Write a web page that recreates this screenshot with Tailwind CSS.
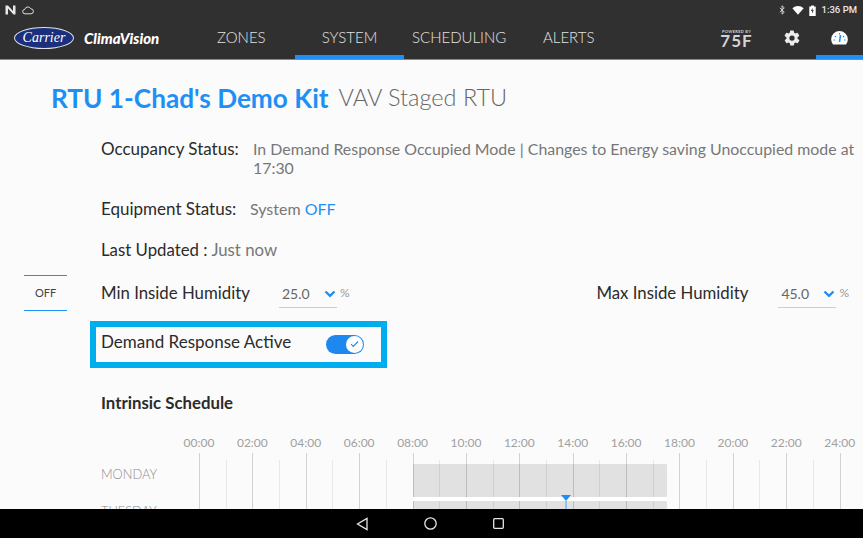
<!DOCTYPE html>
<html lang="en">
<head>
    <meta charset="UTF-8">
    <meta name="viewport" content="width=device-width, initial-scale=1.0">
    <title>ClimaVision - System</title>
    <script src="https://cdn.jsdelivr.net/npm/@tailwindcss/browser@4"></script>
</head>
<body class="bg-[#fbfbfb] font-['Lato',sans-serif] overflow-hidden">
<div class="w-[863px] h-[538px] flex flex-col overflow-hidden">

    <!-- status bar -->
    <div class="h-[20px] shrink-0 bg-[#303030] flex items-center pl-[5px] pr-[6px] text-white">
        <svg width="11" height="10" viewBox="0 0 11 10"><path d="M0.500 0.500h2.500l5 5.500v-5.500h2.500v9h-2l-5.500-6v6h-2.500z" fill="#e8e8e8"/></svg>
        <svg width="12" height="9" viewBox="0 0 12 9" class="ml-[6px]"><path d="M3 7.800a2.200 2.200 0 0 1-.2-4.400a3.200 3.200 0 0 1 6-.6a2.500 2.500 0 0 1 .2 5z" fill="none" stroke="#dddddd" stroke-width="1"/></svg>
        <div class="ml-auto flex items-center">
            <svg width="7" height="10" viewBox="0 0 8 11"><path d="M1 3l5 5l-2.500 2.300v-9.600l2.500 2.300l-5 5" fill="none" stroke="#e8e8e8" stroke-width="1"/></svg>
            <svg width="12" height="9" viewBox="0 0 16 11" class="ml-[6px]"><path d="M0.500 2.500a11 11 0 0 1 15 0l-7.500 8.500z" fill="#ffffff"/></svg>
            <svg width="7" height="11" viewBox="0 0 7 12" class="ml-[5px]"><path d="M2 0.500h3v1h2v10.500h-7v-10.500h2z" fill="#ffffff"/><path d="M3.800 3l-2 3.500h1.400l-.4 3l2.200-3.800h-1.400z" fill="#303030"/></svg>
            <span class="ml-[6px] text-[9.500px] font-['Roboto',sans-serif] font-medium text-[#e8e8e8] whitespace-nowrap leading-none">1:36 PM</span>
        </div>
    </div>

    <!-- top nav -->
    <div class="h-[40px] shrink-0 bg-[#303030] border-b border-[#8a8a8a] flex items-stretch">
        <div class="w-[217px] shrink-0 flex items-center pl-[14px] pb-[3px]">
            <div class="w-[60px] h-[22px] rounded-[50%] bg-[#1b2f7c] border border-[#dfe3ee] flex items-center justify-center">
                <span class="font-['Liberation_Serif',serif] italic text-[14px] text-white leading-none">Carrier</span>
            </div>
            <span class="ml-[10px] text-[15px] font-black italic text-white leading-none">ClimaVision</span>
        </div>
        <div class="flex items-stretch text-[15px] font-light text-[#e4e4e4]">
            <div class="w-[78px] flex items-center pb-[5px]">ZONES</div>
            <div class="w-[109px] flex items-center justify-center pb-[1px] border-b-[4px] border-[#1e90f5]">SYSTEM</div>
            <div class="w-[139px] flex items-center pl-[8px] pb-[5px]">SCHEDULING</div>
            <div class="flex items-center pb-[5px]">ALERTS</div>
        </div>
        <div class="ml-auto flex items-stretch">
            <div class="w-[71px] flex flex-col items-center pt-[9px] text-[#d4d4d4]">
                <span class="text-[4px] font-bold leading-[5px] tracking-[0.3px]">POWERED BY</span>
                <span class="text-[17px] font-bold leading-[13px] tracking-[1px]">75F</span>
            </div>
            <div class="w-[44px] flex items-center justify-center pb-[3px] pr-[4px]">
                <svg width="18" height="18" viewBox="0 0 24 24"><path fill="#ececec" d="M19.400 13a7.500 7.500 0 0 0 0-2l2.100-1.600a.5.500 0 0 0 .1-.6l-2-3.500a.5.500 0 0 0-.6-.2l-2.500 1a7.300 7.300 0 0 0-1.700-1l-.4-2.600a.5.500 0 0 0-.5-.4h-4a.5.500 0 0 0-.5.400l-.4 2.600a7.300 7.300 0 0 0-1.700 1l-2.500-1a.5.500 0 0 0-.6.2l-2 3.500a.5.500 0 0 0 .1.600L4.600 11a7.500 7.500 0 0 0 0 2l-2.100 1.600a.5.500 0 0 0-.1.600l2 3.500a.5.500 0 0 0 .6.2l2.500-1a7.300 7.300 0 0 0 1.700 1l.4 2.600a.5.500 0 0 0 .5.400h4a.5.500 0 0 0 .5-.4l.4-2.600a7.300 7.300 0 0 0 1.700-1l2.500 1a.5.500 0 0 0 .6-.2l2-3.500a.5.500 0 0 0-.1-.6zM12 15.500a3.500 3.500 0 1 1 0-7a3.500 3.500 0 0 1 0 7z"/></svg>
            </div>
            <div class="w-[47px] flex items-center justify-center border-b-[4px] border-[#1e90f5]">
                <svg width="17" height="14" viewBox="0 0 17 14"><path d="M2 13.500a8.300 8.300 0 1 1 13 0z" fill="#ffffff"/><path d="M8.500 11l1-7" stroke="#1e90f5" stroke-width="1.600"/><path d="M2.500 9h1.500M4 5l1 1M8.500 2v1.500M13 5l-1 1M14.500 9h-1.500" stroke="#1e90f5" stroke-width="1.200"/></svg>
            </div>
        </div>
    </div>

    <!-- page content, cut off by the android nav bar -->
    <div class="h-[449px] overflow-hidden bg-[#fbfbfb]">
        <div class="flex items-baseline pl-[51px] pt-[22px] leading-[32px]">
            <h1 class="text-[26.200px] font-bold text-[#1e90f5]">RTU 1-Chad's Demo Kit</h1>
            <span class="ml-[10px] text-[23.500px] font-light text-[#666666] -translate-y-[2px]">VAV Staged RTU</span>
        </div>

        <div class="flex pl-[101px] pt-[24px] pr-[4px] text-[17px] text-[#2b2b2b] leading-[19px]">
            <span class="w-[152px] shrink-0">Occupancy Status:</span>
            <span class="text-[15.900px] text-[#777777] leading-[19px]">In Demand Response Occupied Mode | Changes to Energy saving Unoccupied mode at 17:30</span>
        </div>

        <div class="flex items-baseline pl-[101px] pt-[22px] text-[17px] text-[#2b2b2b] leading-[20px]">
            <span class="w-[149px] shrink-0">Equipment Status:</span>
            <span class="text-[16px] text-[#777777]">System <span class="text-[#1e90f5]">OFF</span></span>
        </div>

        <div class="flex items-baseline pl-[101px] pt-[21px] text-[16.800px] text-[#2b2b2b] leading-[20px]">
            <span>Last Updated :</span>
            <span class="ml-[4px] text-[#777777]">Just now</span>
        </div>

        <div class="flex items-center pl-[24px] pr-[14px] pt-[15px]">
            <div class="w-[43px] h-[36px] shrink-0 border-y border-[#1e90f5] flex items-center justify-center text-[11px] text-[#444444]">OFF</div>
            <span class="ml-[34px] w-[178px] text-[16.800px] text-[#2b2b2b]">Min Inside Humidity</span>
            <div class="w-[58px] h-[27px] mt-[2px] border-b border-[#cfcfcf] flex items-center justify-between text-[14px] text-[#666666] pl-[3px] pr-[1px]">
                25.0
                <svg width="12" height="8" viewBox="0 0 12 8"><path d="M1.500 1.500l4.500 4.300l4.500-4.300" fill="none" stroke="#1e90f5" stroke-width="2.400"/></svg>
            </div>
            <span class="ml-[3px] text-[12px] text-[#999999]">%</span>

            <span class="ml-auto w-[182px] text-[16.800px] text-[#2b2b2b]">Max Inside Humidity</span>
            <div class="w-[58px] h-[27px] mt-[2px] border-b border-[#cfcfcf] flex items-center justify-between text-[14px] text-[#666666] pl-[3px] pr-[1px]">
                45.0
                <svg width="12" height="8" viewBox="0 0 12 8"><path d="M1.500 1.500l4.500 4.300l4.500-4.300" fill="none" stroke="#1e90f5" stroke-width="2.400"/></svg>
            </div>
            <span class="ml-[3px] text-[12px] text-[#999999]">%</span>
        </div>

        <div class="ml-[90px] mt-[10px] w-[297px] h-[47px] border-[6px] border-[#00aeef] flex items-center pl-[5px] pb-[6px]">
            <span class="text-[17px] text-[#2b2b2b]">Demand Response Active</span>
            <div class="ml-[35px] mt-[5px] w-[38px] h-[19px] rounded-full bg-[#1e88f0] flex items-center justify-end pr-[1px]">
                <div class="w-[17px] h-[17px] rounded-full bg-white flex items-center justify-center">
                    <svg width="9" height="8" viewBox="0 0 9 8"><path d="M1 4.200l2.300 2.300l4.700-5" fill="none" stroke="#1e88f0" stroke-width="1.100"/></svg>
                </div>
            </div>
        </div>

        <h2 class="pl-[101px] pt-[24px] text-[16.800px] font-bold text-[#2b2b2b] leading-[22px]">Intrinsic Schedule</h2>

        <!-- schedule chart -->
        <div class="pl-[101px] pt-[22px]">
            <div id="hours" class="ml-[71.300px] flex h-[14px] text-[12px] leading-[14px] text-[#a0a0a0]"></div>
            <div class="flex mt-[3px]">
                <div class="w-[98px] shrink-0 pt-[13px] text-[12.800px] font-light text-[#8c8c8c] leading-[16px]">
                    <div class="h-[37px]">MONDAY</div>
                    <div>TUESDAY</div>
                </div>
                <div class="relative flex-1 h-[56px]">
                    <div id="ticks" class="flex h-full"></div>
                    <div class="absolute left-[213.600px] top-[11px] w-[254.500px] h-[45px] flex flex-col">
                        <div class="h-[33px] bg-black/10 rounded-[1px]"></div>
                        <div class="h-[4px] bg-white"></div>
                        <div class="flex-1 bg-black/10 rounded-[1px]"></div>
                    </div>
                    <!-- current time marker -->
                    <div class="absolute left-[362px] top-[42px] w-[10px] flex flex-col items-center">
                        <div class="w-0 h-0 border-x-[5px] border-x-transparent border-t-[6px] border-t-[#1e90f5]"></div>
                        <div class="w-[2px] h-[8px] bg-[#8fc3f2]"></div>
                    </div>
                </div>
            </div>
        </div>
    </div>

    <!-- android nav bar -->
    <div class="h-[29px] shrink-0 bg-black flex items-center justify-center gap-[56px] pr-[4px]">
        <svg width="12" height="14" viewBox="0 0 12 14"><path d="M11 1.500v11l-9.500-5.500z" fill="none" stroke="#e6e6e6" stroke-width="1.300"/></svg>
        <svg width="13" height="13" viewBox="0 0 13 13"><circle cx="6.500" cy="6.500" r="5.700" fill="none" stroke="#e6e6e6" stroke-width="1.300"/></svg>
        <svg width="11" height="11" viewBox="0 0 11 11"><rect x="0.700" y="0.700" width="9.600" height="9.600" rx="1" fill="none" stroke="#e6e6e6" stroke-width="1.300"/></svg>
    </div>
</div>

<script>
    const hours = document.getElementById('hours');
    const ticks = document.getElementById('ticks');

    for (let h = 0; h <= 24; h += 2) {
        hours.innerHTML += `<div class="w-[53.400px] shrink-0 text-center">${String(h).padStart(2, '0')}:00</div>`;
    }
    // even hours get the long darker tick
    for (let h = 0; h <= 24; h++) {
        ticks.innerHTML += h % 2 === 0
            ? `<div class="w-[26.700px] shrink-0 border-l border-[#d2d2d2]"></div>`
            : `<div class="w-[26.700px] shrink-0 mt-[7px] border-l border-[#e8e8e8]"></div>`;
    }
</script>
</body>
</html>
